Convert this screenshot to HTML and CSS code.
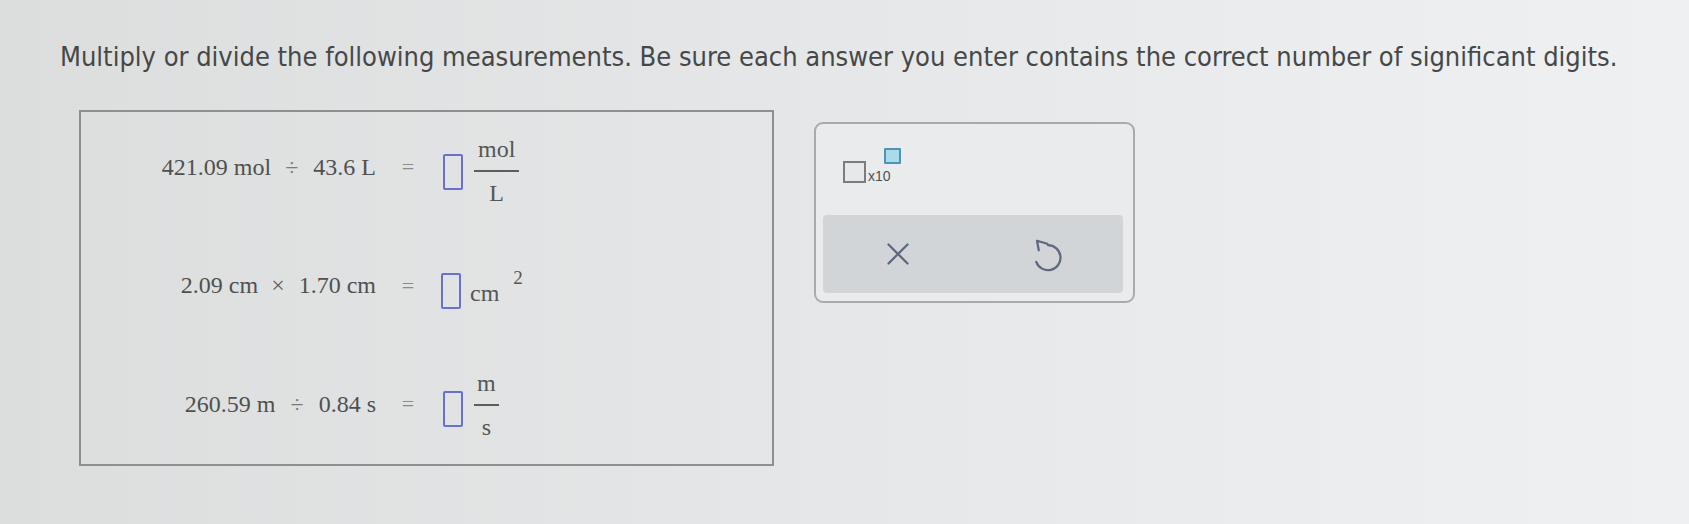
FILE: index.html
```html
<!DOCTYPE html>
<html lang="en">
<head>
<meta charset="utf-8">
<title>Significant digits</title>
<link rel="stylesheet" href="styles.css">
</head>
<body>
<div class="page">
  <p class="instr">Multiply or divide the following measurements. Be sure each answer you enter contains the correct number of significant digits.</p>
  <div class="content">
    <div class="problems">
      <div class="eq-grid">
        <div class="lhs">421.09 mol<span class="op">÷</span>43.6 L</div>
        <div class="eq">=</div>
        <div class="ans">
          <span class="input"></span>
          <span class="frac frac-wide"><span class="num">mol</span><span class="bar-line"></span><span class="den">L</span></span>
        </div>

        <div class="lhs">2.09 cm<span class="op op-x">×</span>1.70 cm</div>
        <div class="eq">=</div>
        <div class="ans">
          <span class="input input-low"></span>
          <span class="unit">cm<span class="sup">2</span></span>
        </div>

        <div class="lhs">260.59 m<span class="op op-3">÷</span>0.84 s</div>
        <div class="eq">=</div>
        <div class="ans">
          <span class="input"></span>
          <span class="frac frac-up"><span class="num">m</span><span class="bar-line"></span><span class="den">s</span></span>
        </div>
      </div>
    </div>

    <div class="panel">
      <div class="sci">
        <span class="sci-box"></span>
        <span class="sci-x">x10</span>
        <span class="sci-exp"></span>
      </div>
      <div class="actions">
        <button class="act" type="button" aria-label="Clear">
          <svg width="24" height="24" viewBox="0 0 24 24"><path d="M2.5 2.5 L21.5 21.5 M21.5 2.5 L2.5 21.5" stroke="#5d6880" stroke-width="2.3" fill="none" stroke-linecap="round"/></svg>
        </button>
        <button class="act" type="button" aria-label="Undo">
          <svg width="30" height="35" viewBox="0 0 24 28"><path d="M12 6.5 A10 10 0 1 1 2.6 19.9" stroke="#5d6880" stroke-width="1.8" fill="none" stroke-linecap="round"/><path d="M4.6 10.6 L3.2 3 L11.5 5.4" stroke="#5d6880" stroke-width="1.8" fill="none" stroke-linecap="round" stroke-linejoin="round"/></svg>
        </button>
      </div>
    </div>
  </div>
</div>
</body>
</html>
```

FILE: styles.css
```css
html, body {
  margin: 0;
  padding: 0;
}

body {
  width: 1689px;
  height: 524px;
  overflow: hidden;
  background: linear-gradient(90deg, #dcdede 0%, #e3e5e6 40%, #eaecee 75%, #eef0f2 100%);
  font-family: "DejaVu Sans Condensed", "DejaVu Sans", sans-serif;
}

.page {
  padding: 41px 0 0 60px;
}

.instr {
  margin: 0;
  font-size: 27px;
  line-height: 32px;
  color: #464848;
  white-space: nowrap;
  font-stretch: condensed;
}

.content {
  display: flex;
  align-items: flex-start;
  margin-top: 37px;
}

.problems {
  margin-left: 19px;
  width: 695px;
  height: 356px;
  box-sizing: border-box;
  border: 2px solid #8e9090;
}

.eq-grid {
  display: grid;
  grid-template-columns: 295px 64px auto;
  grid-template-rows: 110px 127px 110px;
  align-items: center;
  font-family: "Liberation Serif", "Times New Roman", serif;
  font-size: 24px;
  color: #4f5050;
}

.lhs {
  text-align: right;
  white-space: nowrap;
}

.op {
  display: inline-block;
  margin: 0 15px 0 14px;
  color: #7a7b7b;
}

.op-x {
  margin: 0 14px 0 13px;
  color: #5a5b5b;
}

.op-3 {
  margin: 0 15px 0 15px;
}

.eq {
  text-align: center;
  color: #8a8c8c;
  font-size: 22px;
}

.ans {
  display: flex;
  align-items: center;
}

.input {
  display: block;
  width: 20px;
  height: 36px;
  box-sizing: border-box;
  border: 2px solid #6a6fd2;
  border-radius: 2px;
  margin-left: 3px;
  margin-top: 10px;
}

.input-low {
  margin-left: 1px;
}

.frac {
  display: inline-flex;
  flex-direction: column;
  align-items: center;
  margin-left: 11px;
  margin-top: 8px;
  line-height: 24px;
  color: #555656;
}

.frac-up {
  margin-top: 2px;
}

.num {
  padding: 0 3px 9px;
}

.den {
  padding-top: 9px;
}

.bar-line {
  display: block;
  align-self: stretch;
  height: 2px;
  background: #5c5d5d;
}

.frac-wide .num {
  padding-left: 4px;
  padding-right: 4px;
}

.unit {
  margin-left: 9px;
  margin-top: 2px;
  color: #555656;
  white-space: nowrap;
}

.sup {
  display: inline-block;
  font-size: 19px;
  vertical-align: 17px;
  margin-left: 14px;
}

.panel {
  margin-left: 40px;
  margin-top: 12px;
  width: 321px;
  height: 181px;
  box-sizing: border-box;
  border: 2px solid #a8aaab;
  border-radius: 9px;
  background: #e9ebed;
  padding: 24px 10px 8px 7px;
  display: flex;
  flex-direction: column;
}

.sci {
  display: flex;
  align-items: flex-end;
  height: 35px;
  padding-left: 20px;
}

.sci-box {
  display: block;
  width: 23px;
  height: 22px;
  box-sizing: border-box;
  border: 2px solid #7b7d7d;
  background: #e6e8e9;
}

.sci-x {
  font-family: "Liberation Sans", Arial, sans-serif;
  font-size: 14px;
  line-height: 14px;
  color: #4f5152;
  margin-left: 2px;
}

.sci-exp {
  display: block;
  align-self: flex-start;
  width: 17px;
  height: 16px;
  box-sizing: border-box;
  border: 2px solid #4d93b8;
  background: #a9dbe9;
  border-radius: 1px;
  margin-left: -7px;
}

.actions {
  margin-top: auto;
  height: 78px;
  background: #d2d5d8;
  border-radius: 4px;
  display: flex;
}

.act {
  flex: 1;
  display: flex;
  align-items: center;
  justify-content: center;
  background: none;
  border: 0;
  padding: 0;
  margin: 0;
}
```
